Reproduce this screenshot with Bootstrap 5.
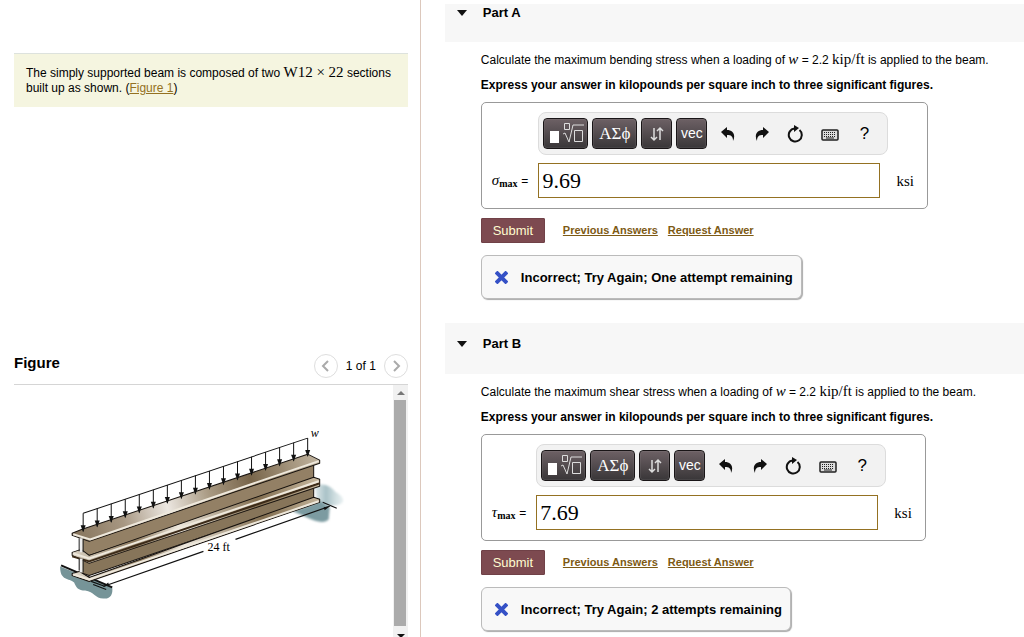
<!DOCTYPE html>
<html lang="en">
<head>
<meta charset="utf-8">
<meta name="viewport" content="width=device-width, initial-scale=1">
<title>Beam bending and shear stress</title>
<link href="https://cdn.jsdelivr.net/npm/bootstrap@5.3.0/dist/css/bootstrap.min.css" rel="stylesheet">
<style>
body{font-family:"Liberation Sans",Arial,sans-serif;font-size:12px;line-height:15px;color:#000;background:#fff}
.problem-pane{width:41.1%;min-height:100vh;border-right:1px solid #dcc8bc;padding:53px 12px 0 14px}
.answer-pane{min-width:0;padding:4px 0 0 24px}
.statement{background:#f5f5e0;border-top:1px solid #dde2dd;padding:11px 8px 11px 12px}
.serif{font-family:"Liberation Serif",serif;font-size:15px;line-height:14px}
.gold-link{color:#947122}
.action-link{color:#7d5a14;font-size:11px}
.figure-head{margin-top:247px;height:31px;border-bottom:1px solid #d5d5d5}
.figure-head h2{font-size:15px;line-height:18px}
.round-btn{width:24px;height:24px;border:1px solid #dedede;border-radius:50%;background:#fff;padding:0}
.scroll-strip{width:15px;background:#f1f1f1}
.scroll-thumb{background:#ababab;width:12px}
.part-head{background:#f7f7f7;height:51px;padding:13px 12px}
.part-head.clipped{height:38px;padding-top:1px}
.part-head h2{font-size:13px;line-height:16px}
.part-body{padding:10px 12px 24px 36px}
.part-body p{margin:0 0 9px;line-height:16px}
.answer-box{border:1px solid #999;border-radius:5px;padding:9px 13px 10px 10px;width:fit-content}
.toolbar-math{background:#f2f2f2;border:1px solid #dcdcdc;border-radius:8px;padding:5px 4px;height:43px;width:350px;margin-bottom:8px}
.dark-btn{height:31px;border:1px solid #191517;border-radius:4px;background:linear-gradient(#6d6165,#393638);box-shadow:inset 0 0 1px #bbb;color:#fff;padding:0;font-size:14px}
.dark-btn.wide{width:45px}
.dark-btn.slim{width:31px}
.dark-btn.greek{font-family:"Liberation Serif",serif;font-size:17px}
.plain-btn{border:0;background:none;padding:0;width:34px;height:31px;font-size:17px}
.answer-label{padding-right:10px;font-family:"Liberation Serif",serif;font-size:15px;padding-bottom:9px}
.answer-label sub{font-weight:bold;font-size:10px;bottom:-2px}
.answer-label .eq{font-family:"Liberation Sans",sans-serif;font-size:12px}
.answer-input{width:342px;height:35px;border:1px solid #947122;font-family:"Liberation Serif",serif;font-size:22px;padding:0 3px;outline:0;color:#000}
.submit-btn{background:#7d4a50;border:1px solid #704147;border-radius:1px;color:#fffcd0;font-size:13px;width:64px;height:25px;padding:0}
.actions{margin:9px 0 12px;gap:10px}
.feedback{width:fit-content;height:44px;background:#f8f8f8;border:1px solid #bbb;border-radius:6px;box-shadow:1px 1px 1px #aaa;padding:0 8px 0 13px;font-size:13px;font-weight:bold;gap:13px}
</style>
</head>
<body>
<div class="d-flex">
<aside class="problem-pane d-flex flex-column flex-shrink-0">
  <div class="statement">The simply supported beam is composed of two <span class="serif">W12 × 22</span> sections<br>built up as shown. (<a href="#figure" class="gold-link">Figure 1</a>)</div>
  <div class="figure-head d-flex justify-content-between align-items-start">
    <h2 class="fw-bold m-0">Figure</h2>
    <div class="d-flex align-items-center gap-2">
      <button class="round-btn d-flex align-items-center justify-content-center" aria-label="Previous figure"><svg width="10" height="12" fill="none" stroke="#aaa" stroke-width="2"><path d="M7 1 2 6l5 5"/></svg></button>
      <span>1 of 1</span>
      <button class="round-btn d-flex align-items-center justify-content-center" aria-label="Next figure"><svg width="10" height="12" fill="none" stroke="#aaa" stroke-width="2"><path d="m3 1 5 5-5 5"/></svg></button>
    </div>
  </div>
  <div id="figure" class="d-flex flex-grow-1">
    <div class="flex-grow-1">
      <svg class="d-block w-100" viewBox="14 385 378 251" role="img" aria-label="Beam with distributed load">
        <defs>
          <linearGradient id="topFace" x1="72" y1="530" x2="319" y2="460" gradientUnits="userSpaceOnUse"><stop offset="0" stop-color="#86745c"/><stop offset=".2" stop-color="#a79782"/><stop offset=".38" stop-color="#ece7e1"/><stop offset=".55" stop-color="#a99a83"/><stop offset=".72" stop-color="#78654a"/><stop offset="1" stop-color="#c2b5a0"/></linearGradient>
          <linearGradient id="flange" x1="72" y1="560" x2="319" y2="480" gradientUnits="userSpaceOnUse"><stop offset="0" stop-color="#ded6c8"/><stop offset=".25" stop-color="#89765a"/><stop offset=".43" stop-color="#ede7dc"/><stop offset=".75" stop-color="#826e50"/><stop offset="1" stop-color="#c8b9a0"/></linearGradient>
          <linearGradient id="mist" x1="0" x2="1"><stop stop-color="#bdd1d5" stop-opacity=".5"/><stop offset=".4" stop-color="#a8c1c6"/><stop offset="1" stop-color="#c9dbde" stop-opacity=".4"/></linearGradient>
          <filter id="soft"><feGaussianBlur stdDeviation="1"/></filter>
        </defs>
        <path d="M314 486c7-4 16-1 21 6 4 2 9 6 7 10-5 5-15 3-25 3z" fill="url(#mist)" filter="url(#soft)"/>
        <path d="m292 511 28-10 9 6-1 12c-4 5-14 2-20-1-5-2-10-5-16-7z" fill="#7b9ba1" filter="url(#soft)"/>
        <path d="M60 566l52 21c1 7-2 12-9 11-8 0-9-7-18-8-7 0-9-3-11-8-5-5-14-1-14-16z" fill="#769498"/>
        <path d="m61 565 51 22" stroke="#111" stroke-width="2"/>
        <g stroke="#17120e" stroke-width="1" stroke-linejoin="round">
          <path d="m80 558 233-75v16L89 575l-9-3z" fill="#87755a"/>
          <path d="m72 573 7-2 10 6 224-80 6 2v3L89 581l-17-6z" fill="url(#flange)"/>
          <path d="m81 537 232-74v17L89 555l-8-3z" fill="#938065"/>
          <path d="m72 552 9-3 8 6 224-78 6 2v7L89 563l-17-8z" fill="url(#flange)"/>
          <path d="M72 556 89 561 319 483" fill="none" stroke="#3b2a18" stroke-width="2"/>
          <path d="m72 533 10-4 225-75 12 6v3L89 541l-17-6z" fill="url(#topFace)"/>
        </g>
        <path d="m73 534 17 5 228-78M73 553l16 5 229-77M73 574l16 5 229-78" fill="none" stroke="#eee8dc" stroke-width="2"/>
        <path d="M81 538v14m0 6v14" stroke="#eee" stroke-width="3"/><path d="M79 538v13m4-12v13m-4 6v12m4-11v13" stroke="#222"/>
        <g id="load" stroke="#111" fill="none"><path d="M83 513 307 438"/></g>
        <path d="m103 586 100-35m32-12 94-33m-7-4 14 6M91 581l14 5m-12-2 13 5" stroke="#111" fill="none" stroke-width="1.2"/>
        <path d="m103 586 5-4 1 3zm226-80-6 1 1 3z" fill="#111"/>
        <text x="207" y="551" font-family="Liberation Serif" font-size="12">24 ft</text>
        <text x="310" y="437" font-family="Liberation Serif" font-size="12" font-style="italic">w</text>
      </svg>
    </div>
    <div class="scroll-strip d-flex flex-column align-items-center justify-content-between">
      <svg width="15" height="15"><path d="m4 10 4-4 4 4z" fill="#777"/></svg>
      <div class="scroll-thumb flex-grow-1"></div>
      <svg width="15" height="11"><path d="M4 8h8l-4 4z" fill="#111"/></svg>
    </div>
  </div>
</aside>
<main class="answer-pane flex-grow-1">
  <section>
    <div class="part-head clipped d-flex align-items-start"><svg class="flex-shrink-0" width="26" height="16"><path d="M0 5h10l-5 6z" fill="#111"/></svg><h2 class="fw-bold m-0">Part A</h2></div>
    <div class="part-body">
      <p>Calculate the maximum bending stress when a loading of <i class="serif">w</i> = 2.2 <span class="serif">kip/ft</span> is applied to the beam.</p>
      <p class="fw-bold">Express your answer in kilopounds per square inch to three significant figures.</p>
      <div class="answer-box d-flex align-items-end">
        <label class="answer-label" for="sigma"><i>σ</i><sub>max</sub> <span class="eq">=</span></label>
        <div>
          <div class="toolbar-math d-flex gap-1" data-toolbar></div>
          <div class="d-flex align-items-center"><input id="sigma" class="answer-input" value="9.69"><label class="serif ms-3" for="sigma">ksi</label></div>
        </div>
      </div>
      <div class="actions d-flex align-items-center"><button class="submit-btn me-2">Submit</button><a href="#" class="action-link fw-bold">Previous Answers</a><a href="#" class="action-link fw-bold">Request Answer</a></div>
      <div class="feedback d-flex align-items-center"><svg width="13" height="13" stroke="#3551c6" stroke-width="4"><path d="m1 1 11 11M12 1 1 12"/></svg>Incorrect; Try Again; One attempt remaining</div>
    </div>
  </section>
  <section>
    <div class="part-head d-flex align-items-start"><svg class="flex-shrink-0" width="26" height="16"><path d="M0 5h10l-5 6z" fill="#111"/></svg><h2 class="fw-bold m-0">Part B</h2></div>
    <div class="part-body pb-0">
      <p>Calculate the maximum shear stress when a loading of <i class="serif">w</i> = 2.2 <span class="serif">kip/ft</span> is applied to the beam.</p>
      <p class="fw-bold">Express your answer in kilopounds per square inch to three significant figures.</p>
      <div class="answer-box d-flex align-items-end">
        <label class="answer-label" for="tau"><i>τ</i><sub>max</sub> <span class="eq">=</span></label>
        <div>
          <div class="toolbar-math d-flex gap-1" data-toolbar></div>
          <div class="d-flex align-items-center"><input id="tau" class="answer-input" value="7.69"><label class="serif ms-3" for="tau">ksi</label></div>
        </div>
      </div>
      <div class="actions d-flex align-items-center"><button class="submit-btn me-2">Submit</button><a href="#" class="action-link fw-bold">Previous Answers</a><a href="#" class="action-link fw-bold">Request Answer</a></div>
      <div class="feedback d-flex align-items-center"><svg width="13" height="13" stroke="#3551c6" stroke-width="4"><path d="m1 1 11 11M12 1 1 12"/></svg>Incorrect; Try Again; 2 attempts remaining</div>
    </div>
  </section>
</main>
</div>
<template id="tools">
  <button class="dark-btn wide" aria-label="Templates"><svg width="37" height="25" fill="none" stroke="#ddd"><path d="M3 10h9v12H3z" fill="#fff" stroke="none"/><path d="M17.500 2.500h5v6h-5zM16 13l2-1 4 9 4-17h11M27.500 9.500h8v11h-8z"/></svg></button>
  <button class="dark-btn wide greek">ΑΣϕ</button>
  <button class="dark-btn slim" aria-label="Arrows"><svg width="16" height="18" fill="none" stroke="#ddd" stroke-width="1.500"><path d="M5 3v12m-3-3 3 3 3-3M11 15V3M8 6l3-3 3 3"/></svg></button>
  <button class="dark-btn slim">vec</button>
  <div class="d-flex">
  <button class="plain-btn" aria-label="Undo"><svg width="14" height="14" fill="#111"><path d="M6 0v3c6 0 9 5 6 11 0-5-2-6-6-6v3L0 5z"/></svg></button>
  <button class="plain-btn" aria-label="Redo"><svg width="14" height="14" fill="#111"><path d="M8 0v3C2 3-1 8 2 14c0-5 2-6 6-6v3l6-6z"/></svg></button>
  <button class="plain-btn" aria-label="Reset"><svg width="18" height="18"><path d="M12.500 5a6.500 6.500 0 1 1-5-1.500" fill="none" stroke="#111" stroke-width="2"/><path d="m7 0 5 3-5 4z" fill="#111"/></svg></button>
  <button class="plain-btn" aria-label="Keyboard"><svg width="18" height="12"><rect x="1" y="1" width="16" height="10" rx="1" fill="#ddd" stroke="#222" stroke-width="1.500"/><path d="M3 3.500h12M3 5.500h12M3 7.500h12" stroke="#222" stroke-dasharray="1 1"/><path d="M5 9h8" stroke="#222"/></svg></button>
  <button class="plain-btn" aria-label="Help">?</button>
  </div>
</template>
<script src="https://cdn.jsdelivr.net/npm/bootstrap@5.3.0/dist/js/bootstrap.bundle.min.js"></script>
<script>
document.querySelectorAll('[data-toolbar]').forEach(bar => bar.append(document.getElementById('tools').content.cloneNode(true)));
// Seventeen evenly spaced load arrows along the beam
let arrows = '';
for (let i = 0; i < 17; i++) {
  const x = 83 + i * 14, top = 513 - i * 4.7, tip = 531 - i * 4.7;
  arrows += `<path d="M${x} ${top}V${tip}"/><path fill="#111" stroke="none" d="M${x - 2.5} ${tip - 6}h5L${x} ${tip + 1}z"/>`;
}
document.getElementById('load').innerHTML += arrows;
</script>
</body>
</html>
